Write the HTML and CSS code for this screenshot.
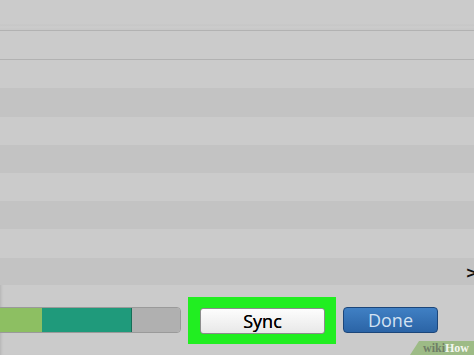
FILE: index.html
```html
<!DOCTYPE html>
<html lang="en">
<head>
    <meta charset="UTF-8">
    <meta name="viewport" content="width=device-width, initial-scale=1.0">
    <title>Sync</title>
    <link rel="stylesheet" href="styles.css">
</head>
<body>
    <div class="window">
        <div class="list">
            <div class="row header"></div>
            <div class="row header short"></div>
            <div class="row"></div>
            <div class="row alt tall"></div>
            <div class="row"></div>
            <div class="row alt"></div>
            <div class="row"></div>
            <div class="row alt"></div>
            <div class="row tall"></div>
            <div class="row alt last">
                <span class="chevron">&gt;</span>
            </div>
        </div>

        <div class="footer">
            <div class="capacity">
                <div class="seg seg-apps"></div>
                <div class="seg seg-music"></div>
                <div class="seg seg-free"></div>
            </div>
            <div class="highlight">
                <button class="button sync">Sync</button>
            </div>
            <button class="button done">Done</button>
        </div>

        <div class="watermark"><span class="wiki">wiki</span><span class="how">How</span></div>
    </div>
</body>
</html>
```

FILE: styles.css
```css
:root {
    --row-light: #cbcbcb;
    --row-dark: #c3c3c3;
    --line: #b2b2b2;
    --highlight: #21ee21;
}

* {
    box-sizing: border-box;
}

body {
    margin: 0;
    width: 474px;
    height: 355px;
    overflow: hidden;
    background: var(--row-light);
    font-family: "Open Sans", "DejaVu Sans", sans-serif;
}

.window {
    position: relative;
    width: 474px;
    height: 355px;
    display: flex;
    flex-direction: column;
    box-shadow: inset 3px 0 3px -2px rgba(0, 0, 0, 0.12);
}

.list {
    display: flex;
    flex-direction: column;
}

.row {
    height: 28px;
    background: var(--row-light);
    display: flex;
    align-items: center;
    justify-content: flex-end;
}

.row.tall {
    height: 29px;
}

.row.alt {
    background: var(--row-dark);
}

.row.last {
    height: 27px;
}

.row.header {
    height: 31px;
    border-bottom: 1px solid var(--line);
    background: linear-gradient(to bottom, #cbcbcb 0, #cbcbcb 24px, #c6c6c6 25px, #cccccc 27px, #c8c8c8 29px);
}

.row.header.short {
    height: 29px;
    background: var(--row-light);
}

.chevron {
    font-family: "DejaVu Sans", sans-serif;
    font-size: 15px;
    font-weight: bold;
    color: #111;
    margin-right: -4px;
    margin-top: 3px;
}

.footer {
    height: 70px;
    display: flex;
    align-items: center;
    gap: 7px;
}

.capacity {
    display: flex;
    width: 189px;
    height: 26px;
    margin-left: -8px;
    border: 1px solid #9a9a9a;
    border-radius: 4px;
    overflow: hidden;
}

.seg {
    height: 100%;
}

.seg-apps {
    width: 49px;
    background: #8dbf62;
}

.seg-music {
    width: 90px;
    background: #1f9a7b;
    border-right: 1px solid #166e57;
}

.seg-free {
    flex: 1;
    background: #b0b0b0;
}

.highlight {
    width: 148px;
    height: 47px;
    background: var(--highlight);
    padding: 11px 11px 10px 12px;
    margin-top: 1px;
}

.button {
    height: 26px;
    font-family: inherit;
    font-size: 18px;
    line-height: 1;
    padding: 0;
    cursor: pointer;
}

.sync {
    width: 125px;
    color: #000;
    background: linear-gradient(to bottom, #fdfdfd, #e8e8e8);
    border: 1px solid #8c8c8c;
    border-radius: 3px;
    text-shadow: 0 0 0.4px #000;
}

.done {
    width: 95px;
    color: #d3e2f3;
    background: linear-gradient(to bottom, #4080c4, #2b64a6);
    border: 1px solid #1c467a;
    border-radius: 4px;
}

.watermark {
    position: absolute;
    right: 0;
    bottom: 0;
    width: 64px;
    height: 14px;
    background: #9dbb86;
    clip-path: polygon(9px 0, 100% 0, 100% 100%, 0 100%);
    font-family: "Liberation Serif", serif;
    font-weight: bold;
    font-size: 12px;
    line-height: 15px;
    padding-left: 13px;
    white-space: nowrap;
}

.wiki {
    color: #6f7d66;
}

.how {
    color: #f4f7f0;
}
```
